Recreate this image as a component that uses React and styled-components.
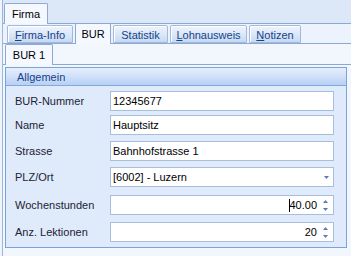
import React from 'react';
import styled, { createGlobalStyle } from 'styled-components';

const GlobalStyle = createGlobalStyle`
  html, body {
    margin: 0;
    padding: 0;
    background: #eef4fc;
  }
  * {
    box-sizing: border-box;
  }
`;

const Frame = styled.div`
  width: 351px;
  height: 256px;
  padding-left: 2px;
  background: #eef4fc;
  font-family: 'Liberation Sans', Arial, sans-serif;
  font-size: 11px;
  overflow: hidden;
`;

const Window = styled.div`
  height: 100%;
  display: flex;
  flex-direction: column;
  border-left: 1px solid #9fb6d8;
`;

const TabStrip = styled.div`
  display: flex;
  align-items: flex-end;
  gap: 2px;
  height: ${(p) => p.height}px;
  padding-left: ${(p) => p.indent}px;
  background: ${(p) => p.bg};
  border-bottom: 1px solid #8ea9d1;
  flex-shrink: 0;
`;

const Tab = styled.div`
  width: ${(p) => p.width}px;
  height: ${(p) => (p.selected ? 21 : 18)}px;
  margin-bottom: ${(p) => (p.selected ? -1 : 0)}px;
  display: flex;
  align-items: center;
  justify-content: center;
  padding-top: ${(p) => (p.selected ? 0 : 1)}px;
  border: 1px solid ${(p) => (p.selected ? '#8eaad3' : '#a2b9dc')};
  border-bottom: ${(p) => (p.selected ? 'none' : '1px solid #a2b9dc')};
  border-radius: 2px 2px 0 0;
  background: ${(p) =>
    p.selected ? '#f5f9ff' : 'linear-gradient(#eef4fd 0%, #dae7f8 55%, #c6d9f3 100%)'};
  box-shadow: ${(p) => (p.selected ? 'none' : 'inset 1px 1px 0 #ffffff')};
  color: ${(p) => (p.selected ? '#000000' : '#15428b')};
  white-space: nowrap;
  position: relative;
  z-index: 1;

  u {
    text-decoration-thickness: 1px;
    text-underline-offset: 1px;
  }
`;

const Body = styled.div`
  flex: 1;
  padding: 2px 4px 5px 2px;
  background: #f2f7fe;
`;

const GroupBox = styled.div`
  height: 181px;
  border: 1px solid #7ca3d8;
  background: #dfeafb;
`;

const GroupHeader = styled.div`
  height: 18px;
  padding-left: 11px;
  display: flex;
  align-items: center;
  background: linear-gradient(#e6effc 0%, #d2e2f9 45%, #b7d0f4 100%);
  border-bottom: 1px solid #84a9dc;
  color: #15428b;
`;

const Fields = styled.div`
  display: flex;
  flex-direction: column;
  padding: 0 12px 0 9px;
`;

const Row = styled.div`
  display: flex;
  align-items: center;
  margin-top: ${(p) => p.space}px;
  height: 20px;
`;

const Label = styled.div`
  width: 95px;
  flex-shrink: 0;
  color: #1c2433;
`;

const Field = styled.div`
  flex: 1;
  height: 20px;
  display: flex;
  align-items: center;
  border: 1px solid #a7bedf;
  background: #ffffff;
  color: #000000;
  padding-left: 2px;
`;

const Value = styled.div`
  flex: 1;
  display: flex;
  align-items: center;
  justify-content: ${(p) => (p.right ? 'flex-end' : 'flex-start')};
  white-space: nowrap;
`;

const Caret = styled.span`
  display: inline-block;
  width: 1px;
  height: 13px;
  background: #000;
  margin-right: -1px;
`;

const Buttons = styled.div`
  width: ${(p) => (p.spin ? 16 : 13)}px;
  height: 100%;
  display: flex;
  flex-direction: column;
  align-items: center;
  justify-content: center;
  gap: 5px;
  flex-shrink: 0;
`;

const Arrow = ({ up }) => (
  <svg width="5" height="3" viewBox="0 0 5 3">
    <path d={up ? 'M2.5 0 L5 3 L0 3 Z' : 'M0 0 L5 0 L2.5 3 Z'} fill="#5a7db3" />
  </svg>
);

const rows = [
  { label: 'BUR-Nummer', value: '12345677', space: 5 },
  { label: 'Name', value: 'Hauptsitz', space: 4 },
  { label: 'Strasse', value: 'Bahnhofstrasse 1', space: 6 },
  { label: 'PLZ/Ort', value: '[6002] - Luzern', space: 6, combo: true },
  { label: 'Wochenstunden', value: '40.00', space: 8, spin: true, caret: true },
  { label: 'Anz. Lektionen', value: '20', space: 7, spin: true },
];

export default function App() {
  return (
    <>
      <GlobalStyle />
      <Frame>
        <Window>
          <TabStrip height={24} indent={1} bg="#dce7f8">
            <Tab selected width={44}>
              Firma
            </Tab>
          </TabStrip>
          <TabStrip height={20} indent={4} bg="#edf3fc">
            <Tab width={66}>
              <span>
                <u>F</u>irma-Info
              </span>
            </Tab>
            <Tab selected width={36}>
              BUR
            </Tab>
            <Tab width={55}>Statistik</Tab>
            <Tab width={77}>
              <span>
                <u>L</u>ohnausweis
              </span>
            </Tab>
            <Tab width={52}>
              <span>
                <u>N</u>otizen
              </span>
            </Tab>
          </TabStrip>
          <TabStrip height={21} indent={2} bg="#f2f7fe">
            <Tab selected width={48}>
              BUR 1
            </Tab>
          </TabStrip>
          <Body>
            <GroupBox>
              <GroupHeader>Allgemein</GroupHeader>
              <Fields>
                {rows.map((r) => (
                  <Row key={r.label} space={r.space}>
                    <Label>{r.label}</Label>
                    <Field>
                      <Value right={r.spin}>
                        {r.caret && <Caret />}
                        {r.value}
                      </Value>
                      {r.combo && (
                        <Buttons>
                          <Arrow />
                        </Buttons>
                      )}
                      {r.spin && (
                        <Buttons spin>
                          <Arrow up />
                          <Arrow />
                        </Buttons>
                      )}
                    </Field>
                  </Row>
                ))}
              </Fields>
            </GroupBox>
          </Body>
        </Window>
      </Frame>
    </>
  );
}
